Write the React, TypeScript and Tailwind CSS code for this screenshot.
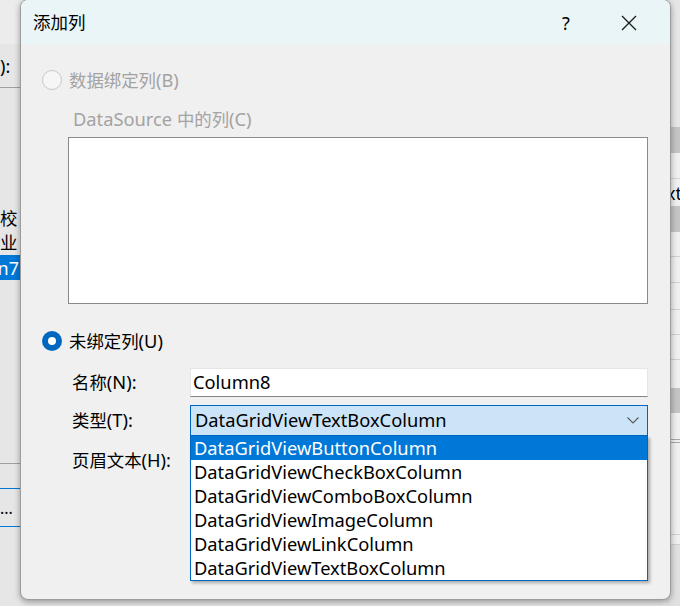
const columnTypes = [
  "DataGridViewButtonColumn",
  "DataGridViewCheckBoxColumn",
  "DataGridViewComboBoxColumn",
  "DataGridViewImageColumn",
  "DataGridViewLinkColumn",
  "DataGridViewTextBoxColumn",
];

// YaHei UI draws latin glyphs larger than the CJK ones, so split the runs
const T = ({ children }: { children: string }) => (
  <span className="whitespace-pre">
    {children.split(/([\u3400-\u9fff]+)/).map((part, i) =>
      /[\u3400-\u9fff]/.test(part) ? (
        <span key={i} className="text-[17.4px]">
          {part}
        </span>
      ) : (
        <span key={i} className="text-[18.3px]">
          {part}
        </span>
      )
    )}
  </span>
);

// the designer window that sits behind the dialog
const Backdrop = () => (
  <>
    {/* left strip */}
    <div className="absolute left-0 top-0 w-[22px] h-full bg-[#e6e6e6]">
      <div className="h-[44px] bg-[#ececec]" />
      <div className="h-[44px] border-b border-[#a0a0a0] flex items-center text-[18px] text-black leading-none">
        ):
      </div>
      <div className="h-[118px]" />
      <div className="h-[25px] flex items-center text-[17.4px] leading-none">校</div>
      <div className="h-[24px] flex items-center text-[17.4px] leading-none">业</div>
      <div className="h-[25px] bg-[#0078d7] text-white text-[18px] leading-none flex items-center justify-end overflow-hidden pr-[3px]">
        n7
      </div>
      <div className="h-[183px]" />
      <div className="h-[26px] border-t border-[#a0a0a0] border-b border-b-[#0078d7]" />
      <div className="h-[38px] border-b border-[#0078d7] flex items-center text-[16px] leading-none">
        ...
      </div>
    </div>
    {/* right strip */}
    <div className="absolute right-0 top-0 w-[14px] h-full bg-[#f0f0f0] flex flex-col">
      <div className="h-[127px] bg-[#e6e6e6]" />
      <div className="h-[26px] bg-[#c4c4c4]" />
      <div className="h-[26px] border-b border-[#d4d4d4]" />
      <div className="h-[27px] flex items-center text-[18px] leading-none">xt</div>
      <div className="h-[26px] bg-[#c4c4c4]" />
      <div className="h-[25px] border-b border-[#d0d0d0]" />
      <div className="h-[26px] border-b border-[#d0d0d0]" />
      <div className="h-[27px] border-b border-[#d0d0d0]" />
      <div className="h-[25px] border-b border-[#d0d0d0]" />
      <div className="h-[25px] border-b border-[#d0d0d0]" />
      <div className="h-[28px]" />
      <div className="h-[25px] bg-[#c4c4c4]" />
      <div className="h-[27px] border-b border-[#a8a8a8]" />
      <div className="h-[3px] border-b border-[#a8a8a8]" />
      <div className="h-[92px] border-b border-[#d0d0d0]" />
      <div className="h-[10px] border-b border-[#d0d0d0]" />
      <div className="flex-1 bg-[#e0e0e0]" />
    </div>
  </>
);

const Radio = ({ checked, disabled }: { checked?: boolean; disabled?: boolean }) =>
  checked ? (
    <span className="w-[20px] h-[20px] rounded-full bg-[#0067c0] flex items-center justify-center shrink-0">
      <span className="w-[8px] h-[8px] rounded-full bg-white" />
    </span>
  ) : (
    <span
      className={
        disabled
          ? "w-[20px] h-[20px] rounded-full border border-[#c8c8c8] bg-[#f6f6f6] shrink-0"
          : "w-[20px] h-[20px] rounded-full border border-[#8a8a8a] bg-white shrink-0"
      }
    />
  );

const App = () => {
  return (
    <div className="relative w-[680px] h-[606px] overflow-hidden bg-[#e6e6e6] font-[family-name:'Noto_Sans','Noto_Sans_CJK_SC',sans-serif] text-black">
      <Backdrop />

      {/* Add column dialog */}
      <div className="absolute left-[20px] top-[-1px] w-[651px] h-[601px] rounded-[8px] border border-[#9c9c9c] bg-[#f0f0f0] shadow-[0_2px_6px_rgba(0,0,0,0.35)] overflow-hidden flex flex-col">
        {/* title bar */}
        <div className="h-[44px] bg-[#e9f5f7] flex items-center pl-[12px] pt-[1px] shrink-0">
          <span className="flex-1 text-[17.5px] leading-none">添加列</span>
          <span className="w-[46px] flex justify-center text-[18px] leading-none">?</span>
          <span className="w-[46px] ml-[17px] mr-[18px] flex justify-center">
            <svg width="16" height="16" viewBox="0 0 16 16" fill="none" stroke="#1a1a1a" strokeWidth="1.3">
              <path d="M1 1 L15 15 M15 1 L1 15" />
            </svg>
          </span>
        </div>

        {/* body */}
        <div className="flex flex-col pl-[21px] leading-none">
          <div className="mt-[26px] h-[20px] flex items-center gap-[7px] text-[#a3a3a3]">
            <Radio disabled />
            <T>数据绑定列(B)</T>
          </div>

          <div className="mt-[19px] h-[20px] pl-[31px] flex items-center text-[#a3a3a3]">
            <T>DataSource 中的列(C)</T>
          </div>

          <div className="mt-[8px] ml-[26px] w-[580px] h-[167px] bg-white border border-[#8a8a8a]" />

          <div className="mt-[27px] h-[20px] flex items-center gap-[7px]">
            <Radio checked />
            <T>未绑定列(U)</T>
          </div>

          <div className="pl-[30px] flex flex-col">
            <div className="mt-[17px] flex items-center">
              <span className="w-[118px]">
                <T>名称(N):</T>
              </span>
              <div className="w-[458px] h-[29px] bg-white border border-[#e6e6e6] border-b-[#858585] flex items-center pl-[2px] text-[18.3px]">
                Column8
              </div>
            </div>

            <div className="mt-[8px] flex items-center">
              <span className="w-[118px]">
                <T>类型(T):</T>
              </span>
              <div className="relative w-[458px] h-[31px]">
                <div className="h-full bg-[#cce4f7] border border-[#0067c0] flex items-center pl-[4px] pr-[8px] text-[18.3px]">
                  <span className="flex-1">DataGridViewTextBoxColumn</span>
                  <svg width="12" height="7" viewBox="0 0 12 7" fill="none" stroke="#5a5a5a" strokeWidth="1.1">
                    <path d="M0.5 0.5 L6 6 L11.5 0.5" />
                  </svg>
                </div>
                {/* dropdown list */}
                <div className="absolute left-0 top-full w-[458px] bg-white border border-t-0 border-[#0067c0] shadow-[2px_2px_3px_rgba(0,0,0,0.3)] z-10 flex flex-col text-[18.3px]">
                  {columnTypes.map((t, i) => (
                    <div
                      key={t}
                      className={
                        i === 0
                          ? "h-[24px] pl-[3px] flex items-center bg-[#0078d7] text-white"
                          : "h-[24px] pl-[3px] flex items-center"
                      }
                    >
                      {t}
                    </div>
                  ))}
                </div>
              </div>
            </div>

            <div className="mt-[12px] h-[24px] flex items-center">
              <span className="w-[118px]">
                <T>页眉文本(H):</T>
              </span>
            </div>
          </div>
        </div>
      </div>
    </div>
  );
};

export default App;
